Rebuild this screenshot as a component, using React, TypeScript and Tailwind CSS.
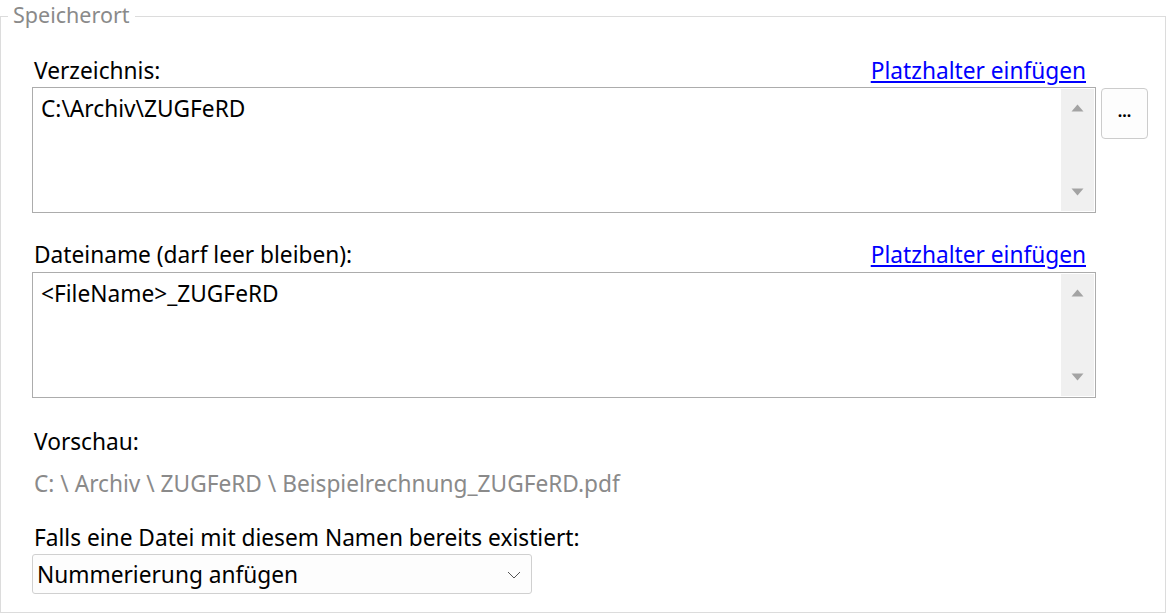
import React from "react";

function ScrollTextArea({ value }: { value: string }) {
  return (
    <div className="flex h-[126px] border border-[#acacac] bg-white">
      <div className="flex-1 pl-[8px] pt-[6px] leading-[30px]">{value}</div>
      <div className="my-[1px] mr-[1px] flex w-[33px] flex-col items-center justify-between bg-[#f0f0f0] py-[15px]">
        <svg width="13" height="8" viewBox="0 0 13 8">
          <path d="M6.5 0.5 L12.5 7.5 L0.5 7.5 Z" fill="#a3a3a3" />
        </svg>
        <svg width="13" height="8" viewBox="0 0 13 8">
          <path d="M0.5 0.5 L12.5 0.5 L6.5 7.5 Z" fill="#a3a3a3" />
        </svg>
      </div>
    </div>
  );
}

export default function App() {
  return (
    <div
      className="h-[615px] w-[1167px] bg-white text-[22.7px] text-black"
      style={{ fontFamily: '"Noto Sans", sans-serif' }}
    >
      <div className="relative mt-[16px] h-[597px] w-[1166px] border border-[#dcdcdc] pl-[31px] pr-[18px] pt-[37px]">
        <div className="absolute left-[7px] top-[-17px] bg-white px-[5px] text-[21.5px] leading-[30px] text-[#8a8a8a]">
          Speicherort
        </div>

        <div className="flex items-start">
          <div className="w-[1064px] shrink-0">
            <div className="flex h-[33px] items-start justify-between pl-[2px] pr-[10px] pt-[2px] leading-[30px]">
              <span>Verzeichnis:</span>
              <a href="#" className="text-[#0000ff] underline underline-offset-[2px]">
                Platzhalter einfügen
              </a>
            </div>
            <ScrollTextArea value="C:\Archiv\ZUGFeRD" />
          </div>
          <button className="ml-[5px] mt-[34px] flex h-[51px] w-[47px] shrink-0 items-center justify-center rounded-[4px] border border-[#cccccc] bg-[#fdfdfd] pb-[6px] text-[16px] font-bold leading-none">
            ...
          </button>
        </div>

        <div className="mt-[25px] w-[1064px]">
          <div className="flex h-[34px] items-start justify-between pl-[2px] pr-[10px] pt-[2px] leading-[30px]">
            <span>Dateiname (darf leer bleiben):</span>
            <a href="#" className="text-[#0000ff] underline underline-offset-[2px]">
              Platzhalter einfügen
            </a>
          </div>
          <ScrollTextArea value="<FileName>_ZUGFeRD" />
        </div>

        <div className="mt-[29px] pl-[2px] leading-[30px]">Vorschau:</div>
        <div className="mt-[12px] pl-[2px] leading-[30px] text-[#8a8a8a]">
          C: \ Archiv \ ZUGFeRD \ Beispielrechnung_ZUGFeRD.pdf
        </div>
        <div className="mt-[24px] pl-[2px] leading-[30px]">
          Falls eine Datei mit diesem Namen bereits existiert:
        </div>
        <div className="mt-[1px] flex h-[40px] w-[500px] items-center justify-between rounded-[3px] border border-[#d0d0d0] bg-[#fdfdfd] pl-[4px] pr-[10px] pt-[2px]">
          <span>Nummerierung anfügen</span>
          <svg width="14" height="8" viewBox="0 0 14 8">
            <path d="M1 1 L7 7 L13 1" fill="none" stroke="#555" strokeWidth="1" />
          </svg>
        </div>
      </div>
    </div>
  );
}
